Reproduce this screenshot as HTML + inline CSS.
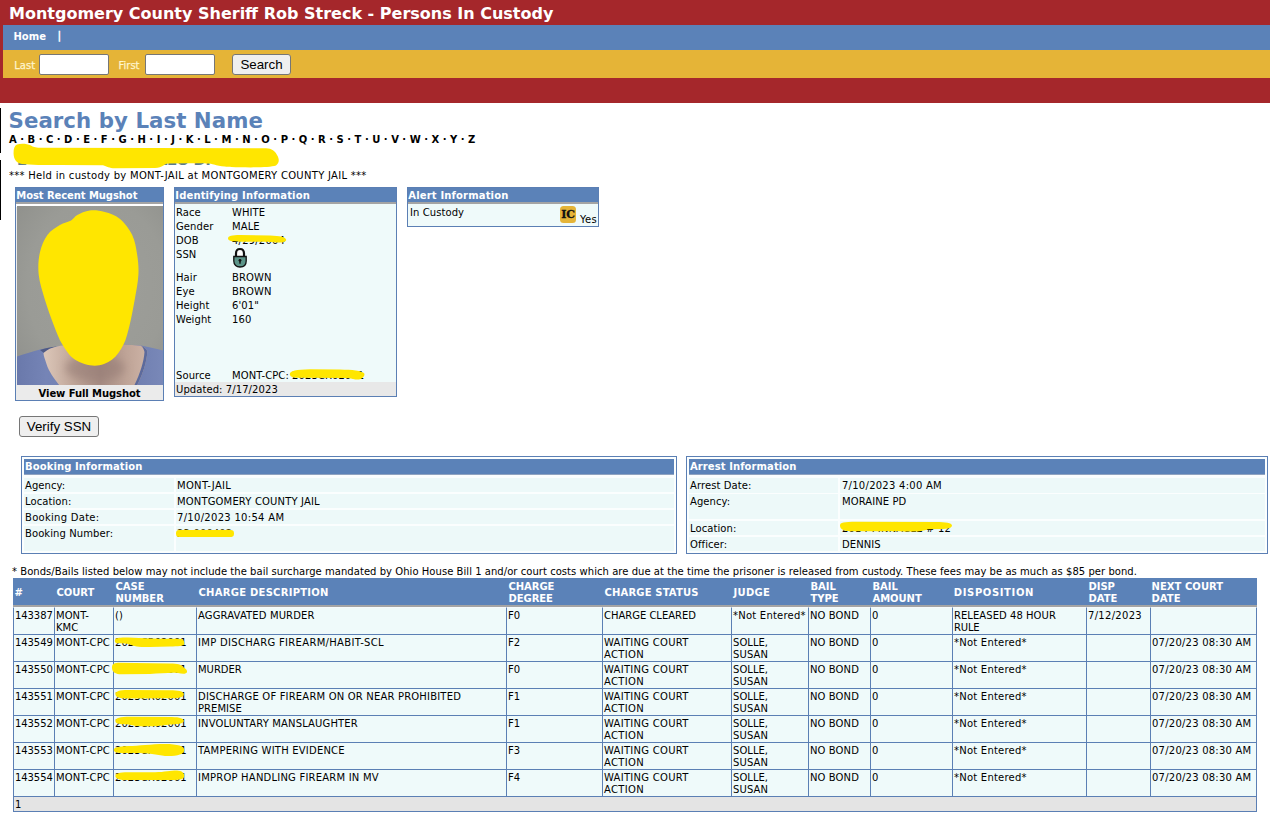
<!DOCTYPE html>
<html><head><meta charset="utf-8"><title>Persons In Custody</title>
<style>
html,body{margin:0;padding:0;background:#fff;}
body{width:1270px;height:823px;position:relative;overflow:hidden;font-family:"DejaVu Sans","Liberation Sans",sans-serif;font-size:10px;color:#000;}
.abs{position:absolute;white-space:nowrap;}
#red{left:0;top:0;width:1270px;height:103px;background:#a5272b;}
#title{left:9px;top:4px;font-weight:bold;font-size:16px;color:#fff;line-height:20px;}
#nav{left:3px;top:25px;width:1267px;height:25px;background:#5b82b8;}
#gold{left:3px;top:50px;width:1267px;height:28px;background:#e5b437;}
#home{left:13.5px;top:29.5px;font-weight:bold;font-size:10px;color:#fff;line-height:13px;}
#pipe{left:57.5px;top:28.5px;font-size:11px;color:#fff;line-height:13px;-webkit-text-stroke:0.4px #fff;}
.lbl{color:#fff5cc;font-size:10px;line-height:13px;-webkit-text-stroke:0.25px #fff5cc;}
.inp{position:absolute;box-sizing:border-box;background:#fff;border:1px solid #767676;border-radius:2px;height:21px;}
.btn{position:absolute;box-sizing:border-box;background:#efefef;border:1px solid #767676;border-radius:3px;font-family:"Liberation Sans",sans-serif;font-size:13.33px;color:#000;text-align:center;}
#h1{left:8.5px;top:107px;font-weight:bold;font-size:21.3px;color:#5b82b8;line-height:28px;letter-spacing:0.05px;}
#alpha{left:9px;top:132.5px;font-size:10px;line-height:13px;font-weight:bold;letter-spacing:0.01px;}
.box{position:absolute;box-sizing:border-box;border:1px solid #5b7fb4;background:#effafa;}
.hd{position:absolute;left:0;top:0;right:0;height:14px;background:#5b82b8;color:#fff;font-weight:bold;font-size:10px;line-height:16px;padding-left:0.3px;white-space:nowrap;border-bottom:2px solid #a4a4a4;letter-spacing:-0.08px;}
.t{position:absolute;white-space:nowrap;font-size:10px;line-height:14px;letter-spacing:0.08px;}
.bx{background:#fbfefe;}
.c{position:absolute;background:#edf9f9;}
.scr{position:absolute;background:#ffe600;border-radius:8px;}
table.g{position:absolute;border-collapse:separate;border-spacing:0;table-layout:fixed;font-size:10px;line-height:12px;letter-spacing:0.05px;}
table.g td{border-right:1px solid #5b7fb4;border-bottom:1px solid #5b7fb4;background:#effafa;padding:2px 1px 0 1px;vertical-align:top;height:24px;overflow:hidden;white-space:nowrap;}
table.g td:first-child{border-left:1px solid #5b7fb4;}
table.g tr.r1 td{border-top:1px solid #f6fafc;}
table.g th{background:#5b82b8;color:#fff;font-weight:bold;text-align:left;padding:3px 2px 0 1.5px;height:24px;vertical-align:middle;border:0;border-bottom:2px solid #a4a4a4;white-space:nowrap;letter-spacing:-0.05px;}
</style></head><body>
<div id="red" class="abs"></div>
<div id="title" class="abs">Montgomery County Sheriff Rob Streck - Persons In Custody</div>
<div id="nav" class="abs"></div>
<div id="gold" class="abs"></div>
<div id="home" class="abs">Home</div>
<div id="pipe" class="abs">|</div>
<div class="abs lbl" style="left:14.3px;top:59px;">Last</div>
<div class="inp" style="left:39px;top:54px;width:70px;"></div>
<div class="abs lbl" style="left:118.5px;top:59px;">First</div>
<div class="inp" style="left:145px;top:54px;width:70px;"></div>
<div class="btn" style="left:232px;top:54px;width:59px;height:21px;line-height:19px;">Search</div>
<div class="abs" style="left:0;top:108px;width:1px;height:45px;background:#000;"></div>
<div class="abs" style="left:0;top:160px;width:1px;height:60px;background:#000;"></div>
<div id="h1" class="abs">Search by Last Name</div>
<div id="alpha" class="abs">A · B · C · D · E · F · G · H · I · J · K · L · M · N · O · P · Q · R · S · T · U · V · W · X · Y · Z</div>
<div class="abs" id="pname" style="left:158px;top:150px;font-size:15px;font-weight:bold;color:#5b7a8c;line-height:20px;letter-spacing:-0.6px;">LEO D.</div>
<div class="abs" style="left:17px;top:150px;font-size:15px;font-weight:bold;color:#5b7a8c;line-height:20px;">L</div>
<svg class="abs" style="left:0;top:140px;" width="300" height="35" viewBox="0 140 300 35"><path d="M13.6,154 C13.4,150 14,146 17,144.5 C21,143.2 27,143.6 31,145.5 C33,147 35,147.6 40,147.7 L150,148 L266,148.3 C272,148.6 275,151 277,155 C279.5,159 279.5,163 276,165.5 C270,167.5 255,167.5 240,167.3 C228,167.2 220,166.5 214,164.5 C210,163.3 200,163.2 190,163.3 L168,163.5 C164,164 163,167.5 155,168 L115,168.3 C109,168.3 107,166.5 103,165.3 L60,165 C45,165 30,165 22,164 C16,163 13.8,159 13.6,154Z" fill="#ffe600"/></svg>
<div class="t" id="held" style="left:9px;top:169px;letter-spacing:0.285px;">*** Held in custody by MONT-JAIL at MONTGOMERY COUNTY JAIL ***</div>

<!-- mugshot -->
<div class="box" style="left:15px;top:187px;width:149px;height:214px;background:#ebebeb;">
 <div class="hd">Most Recent Mugshot</div>
 <div class="abs" style="left:0;top:16px;width:147px;height:3px;background:#fff;"></div>
 <div class="abs" style="left:1px;top:18px;width:146px;height:179px;overflow:hidden;">
  <svg width="146" height="179" viewBox="0 0 146 179" style="position:absolute;left:0;top:0">
   <defs><filter id="bl" x="-30%" y="-30%" width="160%" height="160%"><feGaussianBlur stdDeviation="4"/></filter><radialGradient id="bg" cx="0.55" cy="0.45" r="0.8"><stop offset="0" stop-color="#9e9f9a"/><stop offset="0.6" stop-color="#9a9b96"/><stop offset="1" stop-color="#8c8d89"/></radialGradient>
   <linearGradient id="sk" x1="0" y1="0" x2="1" y2="0"><stop offset="0" stop-color="#dcc7b9"/><stop offset="0.3" stop-color="#bfa598"/><stop offset="0.55" stop-color="#a68c83"/><stop offset="0.8" stop-color="#bfa497"/><stop offset="1" stop-color="#cdb3a6"/></linearGradient>
   <linearGradient id="sh" x1="0" y1="0" x2="1" y2="0"><stop offset="0" stop-color="#6a79ab"/><stop offset="0.2" stop-color="#7584b6"/><stop offset="0.8" stop-color="#6f7eb0"/><stop offset="1" stop-color="#7988b8"/></linearGradient></defs>
   <rect width="146" height="179" fill="url(#bg)"/>
   <path d="M0,150.5 C8,148 16,145 23,143.5 L40,140.5 L106,138.5 L124,139.5 C132,141 140,143 146,144.5 L146,179 L0,179Z" fill="url(#sh)"/>
   <path d="M23,144 C28,142 34,141 40,140.5 L33,143 L27,147Z" fill="#4f5a85"/>
   <path d="M26.5,147 C30,143.5 35,141.5 40,140.5 C45,139.5 48,139 52,139 L106,138.5 C112,138.6 118,139 124,139.8 C127,141 129.5,143 130.3,145 C130,155 126,168 120.2,179 L42.1,179 C37,172 32,166 29.5,158 C28,153 26.5,150 26.5,147Z" fill="url(#sk)"/>
   <path d="M124,139.8 C127,141 129.5,143 130.3,145 C130,155 126,168 120.2,179 L117.5,179 C123,168 127,155 127.5,146 C127,143.5 126,141.5 124,139.8Z" fill="#5c6a9c"/>
   <ellipse cx="78" cy="162" rx="30" ry="13" fill="#967d76" opacity="0.6" filter="url(#bl)"/>
   <path d="M42.9,18.9 C38.9,21.3 33.7,24.3 30.4,28.9 C27.1,33.5 24.3,39.8 22.9,46.4 C21.4,53.0 20.9,60.9 21.7,68.8 C22.5,76.7 25.4,85.4 27.9,93.7 C30.4,102.0 33.7,111.2 36.6,118.7 C39.5,126.2 41.9,132.8 45.4,138.6 C48.9,144.4 52.4,150.1 57.8,153.6 C63.2,157.1 71.6,159.8 77.8,159.8 C84.0,159.8 90.4,157.1 95.2,153.6 C100.0,150.1 103.6,144.4 106.5,138.6 C109.4,132.8 110.8,126.2 112.7,118.7 C114.6,111.2 116.2,102.0 117.7,93.7 C119.2,85.4 121.0,76.3 121.4,68.8 C121.8,61.3 121.2,55.5 120.2,48.9 C119.2,42.2 118.1,34.9 115.2,28.9 C112.3,22.9 107.3,16.5 102.7,12.7 C98.1,8.9 92.8,7.4 87.8,6.0 C82.8,4.6 77.4,4.0 72.8,4.5 C68.2,5.0 63.4,7.3 60.3,9.0 C57.2,10.7 57.0,12.8 54.1,14.4 C51.2,16.1 46.9,16.5 42.9,18.9Z" fill="#ffe600"/>
  </svg>
 </div>
 <div class="t" style="left:0;width:147px;top:199px;text-align:center;font-weight:bold;letter-spacing:-0.08px;">View Full Mugshot</div>
</div>

<!-- identifying -->
<div class="box" style="left:174px;top:187px;width:223px;height:210px;">
 <div class="hd" style="letter-spacing:0.14px;">Identifying Information</div>
 <div class="t" style="left:1px;top:18px;">Race</div><div class="t" style="left:57px;top:18px;">WHITE</div>
 <div class="t" style="left:1px;top:32px;">Gender</div><div class="t" style="left:57px;top:32px;">MALE</div>
 <div class="t" style="left:1px;top:46px;">DOB</div><div class="t" style="left:57px;top:46px;letter-spacing:0.2px;">4/29/2004</div>
 <svg class="abs" style="left:50px;top:44px;" width="66" height="14" viewBox="225 232 66 14"><path d="M228,238.3 C228,236 232,235.1 240,235.1 L270,235.4 C280,235.6 286,237 286.2,239.8 C286,242.3 282,242.8 276,242.4 C270,242 262,241.8 255,241.8 L240,241.7 C232,241.7 228,241 228,238.3Z" fill="#ffe600"/></svg>
 <div class="t" style="left:1px;top:60px;">SSN</div>
 <svg class="abs" style="left:57px;top:59.4px;" width="16" height="21" viewBox="0 0 16 21"><path d="M4 10 V6.5 C4 3 5.5 2 8 2 C10.5 2 12 3 12 6.5 V10" fill="#fff" stroke="#111" stroke-width="2.2"/><path d="M1.8 9.5 H14.2 V14 C14.2 18 11.5 20 8 20 C4.5 20 1.8 18 1.8 14Z" fill="#5b9488" stroke="#111" stroke-width="1.3"/><circle cx="8" cy="13.3" r="1.4" fill="#111"/><rect x="7.3" y="13.5" width="1.4" height="3.2" fill="#111"/></svg>
 <div class="t" style="left:1px;top:83px;">Hair</div><div class="t" style="left:57px;top:83px;">BROWN</div>
 <div class="t" style="left:1px;top:97px;">Eye</div><div class="t" style="left:57px;top:97px;">BROWN</div>
 <div class="t" style="left:1px;top:111px;">Height</div><div class="t" style="left:57px;top:111px;">6'01"</div>
 <div class="t" style="left:1px;top:125px;">Weight</div><div class="t" style="left:57px;top:125px;">160</div>
 <div class="t" style="left:1px;top:181px;">Source</div><div class="t" style="left:57px;top:181px;">MONT-CPC: 2023CR02001</div>
 <svg class="abs" style="left:110px;top:177px;" width="86" height="20" viewBox="285 365 86 20"><path d="M289.8,374 C290,371 296,369.6 310,369.3 L340,369.5 C352,369.8 362,370.5 364.3,373.5 C365,376 363,378 360,379.3 C356,380.2 353,378.6 348,378 L298,377.8 C292,377.6 289.8,376.5 289.8,374Z" fill="#ffe600"/></svg>
 <div class="abs" style="left:0;top:194px;width:221px;height:14px;background:#e8e8e8;"></div>
 <div class="t" style="left:1px;top:195px;">Updated: 7/17/2023</div>
</div>

<!-- alert -->
<div class="box" style="left:407px;top:187px;width:192px;height:40px;">
 <div class="hd" style="letter-spacing:0.16px;">Alert Information</div>
 <div class="t" style="left:2px;top:18px;">In Custody</div>
 <div class="abs" style="left:152px;top:18px;width:16px;height:17px;background:#e5b437;border-radius:3.5px;font-family:'DejaVu Serif','Liberation Serif',serif;font-weight:bold;font-size:11px;line-height:17px;letter-spacing:-0.2px;-webkit-text-stroke:0.3px #111;text-align:center;color:#111;">IC</div>
 <div class="t" style="left:172px;top:24.5px;letter-spacing:0.3px;">Yes</div>
</div>

<div class="btn" style="left:19px;top:416px;width:80px;height:21px;line-height:19px;">Verify SSN</div>

<!-- booking -->
<div class="box bx" style="left:21px;top:456px;width:656px;height:98px;">
 <div class="hd" style="left:2px;top:2px;right:2px;height:15px;line-height:15px;border-bottom:1px solid #90a3c0;letter-spacing:0.1px;padding-left:1px;">Booking Information</div>
<div class="c" style="left:2px;top:21px;width:150px;height:14px;"></div><div class="c" style="left:154px;top:21px;width:498px;height:14px;"></div>
<div class="c" style="left:2px;top:37px;width:150px;height:14px;"></div><div class="c" style="left:154px;top:37px;width:498px;height:14px;"></div>
<div class="c" style="left:2px;top:53px;width:150px;height:14px;"></div><div class="c" style="left:154px;top:53px;width:498px;height:14px;"></div>
<div class="c" style="left:2px;top:69px;width:150px;height:25px;"></div><div class="c" style="left:154px;top:69px;width:498px;height:25px;"></div>
 <div class="t" style="left:3px;top:21.5px;">Agency:</div><div class="t" style="left:155px;top:21.5px;letter-spacing:0.3px;">MONT-JAIL</div>
 <div class="t" style="left:3px;top:37.5px;">Location:</div><div class="t" style="left:155px;top:37.5px;letter-spacing:0.15px;">MONTGOMERY COUNTY JAIL</div>
 <div class="t" style="left:3px;top:53.5px;letter-spacing:0.28px;">Booking Date:</div><div class="t" style="left:155px;top:53.5px;letter-spacing:0.3px;">7/10/2023 10:54 AM</div>
 <div class="t" style="left:3px;top:69.5px;">Booking Number:</div><div class="t" style="left:155px;top:69.5px;color:#4a4300;">23-000402</div>
 <div class="scr" style="left:154px;top:73px;width:58px;height:6.6px;border-radius:3.3px;"></div>
</div>

<!-- arrest -->
<div class="box bx" style="left:686px;top:456px;width:582px;height:98px;">
 <div class="hd" style="left:2px;top:2px;right:2px;height:15px;line-height:15px;border-bottom:1px solid #90a3c0;letter-spacing:0.08px;padding-left:1px;">Arrest Information</div>
<div class="c" style="left:2px;top:21px;width:149px;height:15px;"></div><div class="c" style="left:153px;top:21px;width:425px;height:15px;"></div>
<div class="c" style="left:2px;top:37px;width:149px;height:25px;"></div><div class="c" style="left:153px;top:37px;width:425px;height:25px;"></div>
<div class="c" style="left:2px;top:64px;width:149px;height:14px;"></div><div class="c" style="left:153px;top:64px;width:425px;height:14px;"></div>
<div class="c" style="left:2px;top:80px;width:149px;height:14px;"></div><div class="c" style="left:153px;top:80px;width:425px;height:14px;"></div>
 <div class="t" style="left:3px;top:21.5px;">Arrest Date:</div><div class="t" style="left:155px;top:21.5px;letter-spacing:0.26px;">7/10/2023 4:00 AM</div>
 <div class="t" style="left:3px;top:37.5px;">Agency:</div><div class="t" style="left:155px;top:37.5px;">MORAINE PD</div>
 <div class="t" style="left:3px;top:64.5px;">Location:</div><div class="t" style="left:155px;top:64.5px;letter-spacing:0.2px;">2014 PINNACLE # 12</div>
 <svg class="abs" style="left:149px;top:61.3px;" width="120" height="14" viewBox="0 0 120 14"><path d="M4,7.5 C4,4.5 8,3.8 20,3.8 L100,4 C110,4 115.5,4.8 116,7.5 C116,10 112,11 104,11 L92,11.2 C88,12.5 84,13.6 76,13.6 C70,13.6 66,13.2 60,13.2 L14,13.2 C7,13 4,11 4,7.5Z" fill="#ffe600"/></svg>
 <div class="t" style="left:3px;top:80.5px;">Officer:</div><div class="t" style="left:155px;top:80.5px;">DENNIS</div>
</div>

<div class="t" id="foot" style="left:12px;top:564.5px;letter-spacing:0.045px;">* Bonds/Bails listed below may not include the bail surcharge mandated by Ohio House Bill 1 and/or court costs which are due at the time the prisoner is released from custody. These fees may be as much as $85 per bond.</div>

<table class="g" id="grid" style="left:13px;top:578px;width:1244px;">
<colgroup><col style="width:42px"><col style="width:59px"><col style="width:83px"><col style="width:310px"><col style="width:96px"><col style="width:129px"><col style="width:77px"><col style="width:62px"><col style="width:82px"><col style="width:134px"><col style="width:64px"><col style="width:106px"></colgroup>
<tr><th>#</th><th>COURT</th><th>CASE<br>NUMBER</th><th style="letter-spacing:0.26px;">CHARGE DESCRIPTION</th><th>CHARGE<br>DEGREE</th><th style="letter-spacing:0.16px;">CHARGE STATUS</th><th style="letter-spacing:0.3px;">JUDGE</th><th>BAIL<br>TYPE</th><th>BAIL<br>AMOUNT</th><th style="letter-spacing:0.62px;padding-left:0.8px;">DISPOSITION</th><th>DISP<br>DATE</th><th style="padding-left:0.5px;letter-spacing:0.05px;">NEXT COURT<br>DATE</th></tr>
<tr class="r1"><td><span style="letter-spacing:-0.08px">143387</span></td><td>MONT-<br>KMC</td><td>()</td><td><span style="letter-spacing:0.13px">AGGRAVATED MURDER</span></td><td>F0</td><td><span style="letter-spacing:-0.02px">CHARGE CLEARED</span></td><td><span style="letter-spacing:0.23px">*Not Entered*</span></td><td><span style="letter-spacing:0.10px">NO BOND</span></td><td>0</td><td><span style="letter-spacing:0.05px">RELEASED 48 HOUR</span><br><span style="letter-spacing:-0.16px">RULE</span></td><td><span style="letter-spacing:0.30px">7/12/2023</span></td><td></td></tr>
<tr><td><span style="letter-spacing:-0.08px">143549</span></td><td><span style="letter-spacing:0.15px">MONT-CPC</span></td><td>2023CR02001</td><td><span style="letter-spacing:0.31px">IMP DISCHARG FIREARM/HABIT-SCL</span></td><td>F2</td><td><span style="letter-spacing:0.27px">WAITING COURT</span><br><span style="letter-spacing:0.31px">ACTION</span></td><td><span style="letter-spacing:0.03px">SOLLE,</span><br><span style="letter-spacing:0.12px">SUSAN</span></td><td><span style="letter-spacing:0.10px">NO BOND</span></td><td>0</td><td><span style="letter-spacing:0.23px">*Not Entered*</span></td><td></td><td><span style="letter-spacing:0.23px">07/20/23 08:30 AM</span></td></tr>
<tr><td><span style="letter-spacing:-0.08px">143550</span></td><td><span style="letter-spacing:0.15px">MONT-CPC</span></td><td>2023CR02001</td><td><span style="letter-spacing:-0.01px">MURDER</span></td><td>F0</td><td><span style="letter-spacing:0.27px">WAITING COURT</span><br><span style="letter-spacing:0.31px">ACTION</span></td><td><span style="letter-spacing:0.03px">SOLLE,</span><br><span style="letter-spacing:0.12px">SUSAN</span></td><td><span style="letter-spacing:0.10px">NO BOND</span></td><td>0</td><td><span style="letter-spacing:0.23px">*Not Entered*</span></td><td></td><td><span style="letter-spacing:0.23px">07/20/23 08:30 AM</span></td></tr>
<tr><td><span style="letter-spacing:-0.08px">143551</span></td><td><span style="letter-spacing:0.15px">MONT-CPC</span></td><td>2023CR02001</td><td><span style="letter-spacing:0.18px">DISCHARGE OF FIREARM ON OR NEAR PROHIBITED</span><br>PREMISE</td><td>F1</td><td><span style="letter-spacing:0.27px">WAITING COURT</span><br><span style="letter-spacing:0.31px">ACTION</span></td><td><span style="letter-spacing:0.03px">SOLLE,</span><br><span style="letter-spacing:0.12px">SUSAN</span></td><td><span style="letter-spacing:0.10px">NO BOND</span></td><td>0</td><td><span style="letter-spacing:0.23px">*Not Entered*</span></td><td></td><td><span style="letter-spacing:0.23px">07/20/23 08:30 AM</span></td></tr>
<tr><td><span style="letter-spacing:-0.08px">143552</span></td><td><span style="letter-spacing:0.15px">MONT-CPC</span></td><td>2023CR02001</td><td><span style="letter-spacing:0.14px">INVOLUNTARY MANSLAUGHTER</span></td><td>F1</td><td><span style="letter-spacing:0.27px">WAITING COURT</span><br><span style="letter-spacing:0.31px">ACTION</span></td><td><span style="letter-spacing:0.03px">SOLLE,</span><br><span style="letter-spacing:0.12px">SUSAN</span></td><td><span style="letter-spacing:0.10px">NO BOND</span></td><td>0</td><td><span style="letter-spacing:0.23px">*Not Entered*</span></td><td></td><td><span style="letter-spacing:0.23px">07/20/23 08:30 AM</span></td></tr>
<tr><td><span style="letter-spacing:-0.08px">143553</span></td><td><span style="letter-spacing:0.15px">MONT-CPC</span></td><td>2023CR02001</td><td><span style="letter-spacing:0.21px">TAMPERING WITH EVIDENCE</span></td><td>F3</td><td><span style="letter-spacing:0.27px">WAITING COURT</span><br><span style="letter-spacing:0.31px">ACTION</span></td><td><span style="letter-spacing:0.03px">SOLLE,</span><br><span style="letter-spacing:0.12px">SUSAN</span></td><td><span style="letter-spacing:0.10px">NO BOND</span></td><td>0</td><td><span style="letter-spacing:0.23px">*Not Entered*</span></td><td></td><td><span style="letter-spacing:0.23px">07/20/23 08:30 AM</span></td></tr>
<tr><td><span style="letter-spacing:-0.08px">143554</span></td><td><span style="letter-spacing:0.15px">MONT-CPC</span></td><td>2023CR02001</td><td><span style="letter-spacing:0.21px">IMPROP HANDLING FIREARM IN MV</span></td><td>F4</td><td><span style="letter-spacing:0.27px">WAITING COURT</span><br><span style="letter-spacing:0.31px">ACTION</span></td><td><span style="letter-spacing:0.03px">SOLLE,</span><br><span style="letter-spacing:0.12px">SUSAN</span></td><td><span style="letter-spacing:0.10px">NO BOND</span></td><td>0</td><td><span style="letter-spacing:0.23px">*Not Entered*</span></td><td></td><td><span style="letter-spacing:0.23px">07/20/23 08:30 AM</span></td></tr>
<tr><td colspan="12" style="background:#e4e4e4;height:12px;padding-top:2px;padding-bottom:0px;">1</td></tr>
</table>
<svg class="abs" style="left:105px;top:630px;" width="95" height="160" viewBox="105 630 95 160"><path d="M114.8,640.5 C115,638 119,637.3 128,637.5 L150,638.5 C160,638.8 175,638.5 181,639 C184,639.5 184.5,642 184.3,644 C184,646 178,646.3 170,646.5 L150,647 C140,647.2 134,646.5 130,644.5 C127,643.2 120,643.5 117,643.2 C115.2,643 114.8,642 114.8,640.5Z" fill="#ffe600"/><path d="M112,668 C111.8,665 113,663 118,662.8 L170,663.5 C178,663.6 181,664.5 183,667 C185,668.5 187.5,669.5 187,672 C186.5,674 183,674.3 178,673 C172,672.3 160,673.5 150,674 L122,674.3 C115,674.3 112.3,672 112,668Z" fill="#ffe600"/><path d="M115.4,694 C115.6,691.5 119,690 128,690 L170,690.2 C178,690.3 183.5,691 183.8,694 C183.8,697 180,698.2 172,698.3 L126,698.4 C119,698.4 115.4,697 115.4,694Z" fill="#ffe600"/><path d="M115.4,721 C115.6,718 120,716.8 130,716.8 L172,717 C180,717.2 183.8,718.5 183.8,721 C183.8,723.5 178,724.3 168,724.8 C160,726.2 150,726.5 140,726.3 C134,726 130,724.2 125,724.2 C118,724.2 115.4,723.5 115.4,721Z" fill="#ffe600"/><path d="M113.8,750 C114,747.5 118,746.3 128,746 C140,745.8 150,744 165,743.9 C178,743.9 184.3,746 184.3,750 C184.3,754 178,756 168,756 C160,756 152,753.2 140,753 L122,753 C116,753 113.8,752 113.8,750Z" fill="#ffe600"/><path d="M115.4,776 C115.6,773.5 119,772.3 128,772.3 L155,772.3 C165,772.2 170,770.6 177,770.6 C182,770.8 184.3,773 184.3,776 C184.3,779 180,780 172,780 L126,780 C119,780 115.4,778.5 115.4,776Z" fill="#ffe600"/></svg>
</body></html>
